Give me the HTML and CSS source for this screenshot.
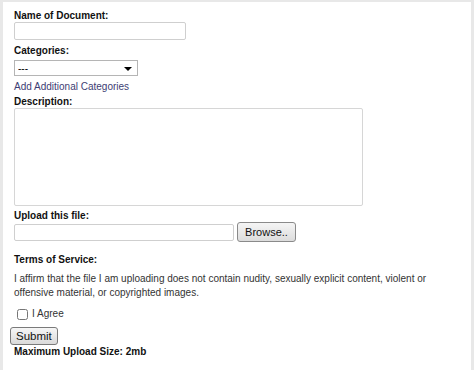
FILE: index.html
```html
<!DOCTYPE html>
<html lang="en">
<head>
  <meta charset="UTF-8">
  <title>Upload Document</title>
  <link rel="stylesheet" href="styles.css">
</head>
<body>
  <div class="page">
    <form class="upload-form">
      <label class="field-label" for="docName">Name of Document:</label>
      <input type="text" id="docName" class="text-input">

      <label class="field-label" for="category">Categories:</label>
      <span class="select-wrap">
        <select id="category" class="select-input">
          <option>---</option>
        </select>
      </span>
      <a href="#" class="add-link">Add Additional Categories</a>

      <label class="field-label desc-label" for="description">Description:</label>
      <textarea id="description" class="desc-input"></textarea>

      <label class="field-label upload-label" for="fileName">Upload this file:</label>
      <div class="file-row">
        <input type="text" id="fileName" class="file-input" readonly>
        <button type="button" class="browse-btn">Browse..</button>
      </div>

      <h4 class="terms-title">Terms of Service:</h4>
      <p class="terms-text">I affirm that the file I am uploading does not contain nudity, sexually explicit content, violent or offensive material, or copyrighted images.</p>

      <label class="agree"><input type="checkbox" class="agree-box"> I Agree</label>

      <button type="submit" class="submit-btn">Submit</button>
      <div class="max-size">Maximum Upload Size: 2mb</div>
    </form>
  </div>
</body>
</html>
```

FILE: styles.css
```css
* {
  box-sizing: border-box;
}

body {
  margin: 0;
  background: #fff;
  font-family: "Liberation Sans", Arial, sans-serif;
  font-size: 10px;
  color: #222;
}

.page {
  height: 370px;
  border: solid #e8e8e8;
  border-width: 2px 3px 0 3px;
  background: #fff;
}

.upload-form {
  padding: 8px 11px 0 11px;
}

.field-label {
  display: block;
  font-weight: bold;
  line-height: 12px;
  color: #111;
}

.text-input {
  display: block;
  width: 172px;
  height: 18px;
  margin: 0 0 5px 0;
  border: 1px solid #cfcfcf;
  border-radius: 2px;
  font: inherit;
}

.select-wrap {
  position: relative;
  display: block;
  width: 124px;
  height: 16px;
  margin-top: 3px;
}

.select-wrap::after {
  content: "";
  position: absolute;
  right: 6px;
  top: 7px;
  border-left: 4px solid transparent;
  border-right: 4px solid transparent;
  border-top: 4px solid #000;
  pointer-events: none;
}

.select-input {
  appearance: none;
  width: 100%;
  height: 100%;
  margin: 0;
  padding: 0 3px;
  border: 1px solid #b5b5b5;
  border-radius: 0;
  background: #fff;
  font: inherit;
  color: #000;
}

.add-link {
  display: block;
  margin-top: 5px;
  line-height: 12px;
  color: #3d3d73;
  text-decoration: none;
}

.desc-label {
  margin-top: 3px;
}

.desc-input {
  display: block;
  width: 349px;
  height: 98px;
  margin: 0;
  border: 1px solid #d6d6d6;
  border-radius: 2px;
  resize: none;
  font: inherit;
}

.upload-label {
  margin-top: 4px;
}

.file-row {
  display: flex;
  align-items: center;
  gap: 3px;
}

.file-input {
  width: 220px;
  height: 17px;
  border: 1px solid #cfcfcf;
  border-radius: 2px;
  font: inherit;
}

.browse-btn {
  width: 59px;
  height: 20px;
  padding: 0;
  border: 1px solid #8a8a8a;
  border-radius: 3px;
  background: linear-gradient(#f5f5f5, #dcdcdc);
  font: inherit;
  font-size: 11px;
  color: #111;
}

.terms-title {
  margin: 12px 0 0 0;
  font-size: 10px;
  line-height: 12px;
  color: #111;
}

.terms-text {
  margin: 6px 0 0 0;
  line-height: 14px;
  color: #333;
}

.agree {
  display: flex;
  align-items: center;
  gap: 4px;
  margin-top: 8px;
  line-height: 12px;
  color: #333;
}

.agree-box {
  width: 11px;
  height: 11px;
  margin: 0 0 0 3px;
}

.submit-btn {
  display: block;
  height: 18px;
  margin: 7px 0 0 -4px;
  padding: 0 5px;
  border: 1px solid #7a7a7a;
  border-radius: 3px;
  background: linear-gradient(#f6f6f6, #dadada);
  font: inherit;
  font-size: 11.5px;
  color: #111;
}

.max-size {
  margin-top: 1px;
  font-weight: bold;
  line-height: 12px;
  color: #111;
}
```
